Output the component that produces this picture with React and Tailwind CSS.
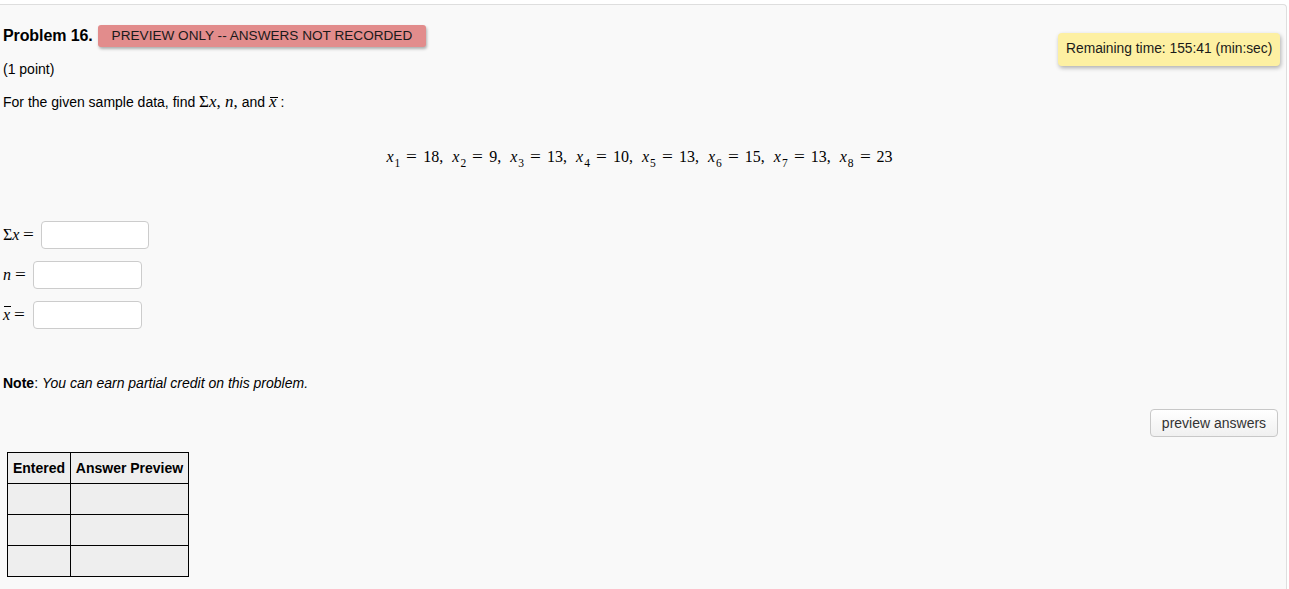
import React from "react";

const sans = { fontFamily: '"Liberation Sans", Arial, sans-serif' };

function X({ n }) {
  return (
    <span className="whitespace-nowrap">
      <i>x</i>
      <sub className="text-[11.5px] ml-[1px]" style={{ verticalAlign: "-2px" }}>{n}</sub>
    </span>
  );
}

function XBar() {
  return (
    <span className="relative inline-block before:absolute before:left-[1px] before:right-[-1px] before:top-[3px] before:h-px before:bg-black before:content-['']">
      <i>x</i>
    </span>
  );
}

function MathLine() {
  const data = [18, 9, 13, 10, 13, 15, 13, 23];
  return (
    <div className="flex justify-center pr-[10px] text-[16px] text-black font-['Liberation_Serif',serif] leading-[20px]">
      {data.map((v, i) => (
        <span key={i} className="whitespace-nowrap">
          <X n={i + 1} />
          <span className="mx-[7px] inline-block scale-x-[1.2]">=</span>
          {v}
          {i < data.length - 1 ? <span className="mr-[9px]">,</span> : null}
        </span>
      ))}
    </div>
  );
}

function InputRow({ label, labelW, inputW }) {
  return (
    <div className="flex items-center h-[28px]">
      <span className="flex items-center" style={{ width: labelW }}>
        {label}
      </span>
      <div className="h-[28px] bg-white border border-[#cccccc] rounded-[4px]" style={{ width: inputW }} />
    </div>
  );
}

export default function App() {
  return (
    <div className="relative w-[1289px] h-[589px] bg-white overflow-hidden text-black" style={sans}>
      <div className="mt-[4px] w-[1287px] h-[585px] bg-[#f9f9f9] border-t border-r border-[#dedede] rounded-tr-[4px] pl-[3px]">
        {/* header */}
        <div className="flex items-center mt-[20px] h-[22px]">
          <span className="text-[16px] font-bold leading-[22px] tracking-[-0.1px]">Problem 16.</span>
          <span className="ml-[5px] h-[22px] px-[14px] flex items-center bg-[#e28c8c] rounded-[3px] text-[13.6px] text-[#1a1a1a] shadow-[1px_2px_3px_rgba(0,0,0,0.3)]">
            PREVIEW ONLY -- ANSWERS NOT RECORDED
          </span>
        </div>
        <div className="mt-[14px] text-[14px] leading-[16px]">(1 point)</div>
        <div className="mt-[17px] text-[14px] leading-[16px] flex items-baseline">
          <span>For the given sample data, find&nbsp;</span>
          <span className="font-['Liberation_Serif',serif] text-[17px]">Σ<i>x</i>, <i>n</i>,</span>
          <span>&nbsp;and&nbsp;</span>
          <span className="font-['Liberation_Serif',serif] text-[17px]"><XBar /></span>
          <span>&nbsp;:</span>
        </div>
        <div className="mt-[37px]">
          <MathLine />
        </div>
        <div className="mt-[54px] flex flex-col gap-[12px] font-['Liberation_Serif',serif] text-[16px]">
          <InputRow label={<span>Σ<i>x</i><span className="ml-[5px] inline-block scale-x-[1.2]">=</span></span>} labelW={38} inputW={108} />
          <InputRow label={<span><i>n</i><span className="ml-[5px] inline-block scale-x-[1.2]">=</span></span>} labelW={30} inputW={109} />
          <InputRow label={<span><XBar /><span className="ml-[5px] inline-block scale-x-[1.2]">=</span></span>} labelW={30} inputW={109} />
        </div>
        <div className="mt-[46px] text-[14px] leading-[16px]">
          <b>Note</b>: <i>You can earn partial credit on this problem.</i>
        </div>
        <div className="mt-[18px] flex justify-end pr-[8px]">
          <button className="h-[28px] w-[128px] bg-gradient-to-b from-white to-[#f0f0f0] border border-[#c8c8c8] rounded-[4px] text-[14px] text-[#333]">
            preview answers
          </button>
        </div>
        <table className="mt-[15px] ml-[4px] border-collapse text-[14px] bg-[#eeeeee] table-fixed">
          <thead>
            <tr className="h-[31px]">
              <th className="border border-black w-[63px] px-0 font-bold">Entered</th>
              <th className="border border-black w-[118px] px-0 font-bold">Answer Preview</th>
            </tr>
          </thead>
          <tbody>
            {[0, 1, 2].map((i) => (
              <tr key={i} className="h-[31px]">
                <td className="border border-black"></td>
                <td className="border border-black"></td>
              </tr>
            ))}
          </tbody>
        </table>
      </div>
      <div className="absolute top-[33px] left-[1058px] w-[222px] h-[33px] bg-[#fdf0a2] rounded-[4px] shadow-[1px_2px_4px_rgba(0,0,0,0.3)] flex items-center pl-[8px] text-[13.8px] text-[#1a1a1a]">
        Remaining time: 155:41 (min:sec)
      </div>
    </div>
  );
}
